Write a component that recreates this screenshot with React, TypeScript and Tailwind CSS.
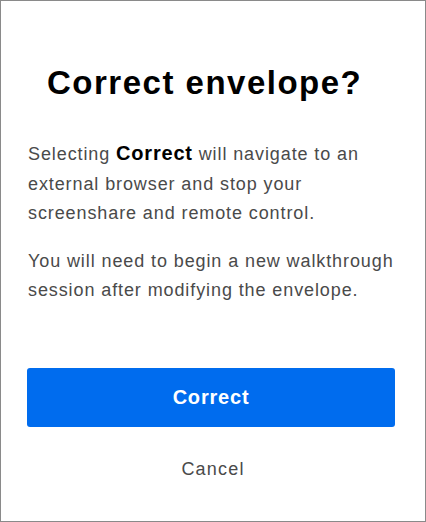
export default function App() {
  return (
    <div
      className="w-[426px] h-[522px] border border-[#8a8a8a] bg-white flex flex-col"
      style={{ fontFamily: '"Liberation Sans", Arial, sans-serif' }}
    >
      <h1 className="pt-[64px] pl-[46px] text-[33px] leading-[36px] font-bold tracking-[1.5px] text-black">
        Correct envelope?
      </h1>
      <div className="mt-[38px] px-[27px] text-[18px] leading-[29.5px] tracking-[0.9px] text-[#4a4a4a]">
        <p>
          Selecting <span className="font-bold text-black text-[20px] tracking-[0.8px]">Correct</span> will navigate to an external browser and stop your screenshare and remote control.
        </p>
        <p className="mt-[18px]">
          You will need to begin a new walkthrough session after modifying the envelope.
        </p>
      </div>
      <div className="mt-[62px] pl-[26px]">
        <button className="w-[368px] h-[59px] rounded-[3px] bg-[#006cee] text-white text-[20px] font-bold tracking-[0.8px]">
          Correct
        </button>
      </div>
      <div className="mt-[29px] text-center text-[18px] tracking-[1.2px] text-[#4a4a4a]">Cancel</div>
    </div>
  );
}
